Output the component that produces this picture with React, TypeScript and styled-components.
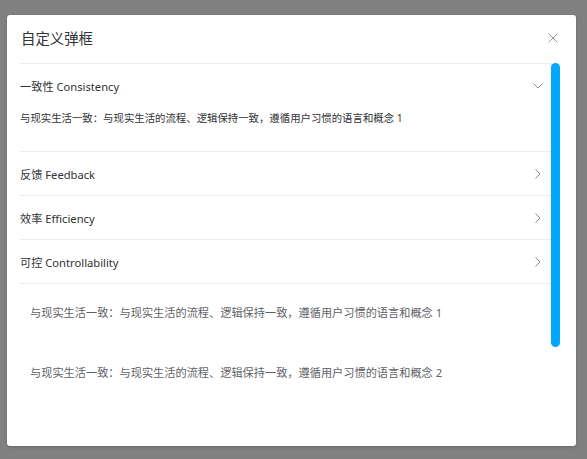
import React from 'react';
import styled, { createGlobalStyle } from 'styled-components';

const GlobalStyle = createGlobalStyle`
  html, body {
    margin: 0;
    padding: 0;
    background: #808080;
    font-family: "Noto Sans", "Noto Sans CJK SC", sans-serif;
  }
  #root {
    height: 459px;
  }
`;

const items = [
  { title: '一致性 Consistency', open: true },
  { title: '反馈 Feedback', open: false },
  { title: '效率 Efficiency', open: false },
  { title: '可控 Controllability', open: false },
];

const paragraphs = [1, 2];

const text = '与现实生活一致：与现实生活的流程、逻辑保持一致，遵循用户习惯的语言和概念';

const Chevron = ({ open }: { open: boolean }) =>
  open ? (
    <svg width="10" height="6" viewBox="0 0 10 6">
      <polyline points="0.5,0.5 5,5 9.5,0.5" fill="none" stroke="#8a8a8a" strokeWidth="1" />
    </svg>
  ) : (
    <svg width="6" height="10" viewBox="0 0 6 10">
      <polyline points="0.5,0.5 5,5 0.5,9.5" fill="none" stroke="#8a8a8a" strokeWidth="1" />
    </svg>
  );

export default function App() {
  return (
    <>
      <GlobalStyle />
      <Dialog>
        <Header>
          <Title>自定义弹框</Title>
          <Close aria-label="close">
            <svg width="10" height="10" viewBox="0 0 10 10">
              <path d="M0.5 0.5 L9.5 9.5 M9.5 0.5 L0.5 9.5" stroke="#9a9a9a" strokeWidth="1" />
            </svg>
          </Close>
        </Header>
        <Body>
          <Scroll>
            <Collapse>
              {items.map((it) => (
                <Item key={it.title}>
                  <ItemHead>
                    <span>{it.title}</span>
                    <IconBox>
                      <Chevron open={it.open} />
                    </IconBox>
                  </ItemHead>
                  {it.open && <ItemContent>{text} 1</ItemContent>}
                </Item>
              ))}
            </Collapse>
            {paragraphs.map((n) => (
              <Para key={n}>
                {text} {n}
              </Para>
            ))}
          </Scroll>
          <Track>
            <Thumb />
          </Track>
        </Body>
      </Dialog>
    </>
  );
}

const Dialog = styled.div`
  position: relative;
  top: 15px;
  margin-left: 7px;
  width: 569px;
  height: 431px;
  background: #fff;
  border-radius: 3px;
  box-shadow: 0 1px 3px rgba(0, 0, 0, 0.2);
  display: flex;
  flex-direction: column;
  box-sizing: border-box;
  padding: 0 16px 20px 13px;
`;

const Header = styled.div`
  height: 48px;
  flex: none;
  display: flex;
  align-items: center;
  justify-content: space-between;
  padding-left: 1px;
`;

const Title = styled.span`
  font-size: 14.4px;
  color: #303133;
  line-height: 20px;
  margin-top: -1px;
`;

const Close = styled.button`
  border: none;
  background: none;
  padding: 0;
  margin-right: 2px;
  margin-top: -2px;
  width: 10px;
  height: 10px;
  display: flex;
  cursor: pointer;
`;

const Body = styled.div`
  flex: 1;
  min-height: 0;
  display: flex;
`;

const Scroll = styled.div`
  flex: 1;
  min-width: 0;
  overflow: hidden;
`;

const Track = styled.div`
  width: 9px;
  flex: none;
  display: flex;
  flex-direction: column;
`;

const Thumb = styled.div`
  height: 284px;
  background: #00a8ff;
  border-radius: 5px;
`;

const Collapse = styled.div`
  border-top: 1px solid #e8ecf2;
`;

const Item = styled.div`
  border-bottom: 1px solid #e8ecf2;
`;

const ItemHead = styled.div`
  height: 43px;
  display: flex;
  align-items: center;
  justify-content: space-between;
  font-size: 11.2px;
  color: #303133;
`;

const IconBox = styled.span`
  width: 10px;
  display: flex;
  justify-content: center;
  margin-right: 8px;
`;

const ItemContent = styled.div`
  padding: 3px 0 25px;
  line-height: 16px;
  font-size: 10.4px;
  color: #303133;
`;

const Para = styled.p`
  margin: 0;
  padding: 21px 0 23px 10px;
  line-height: 16px;
  font-size: 11.2px;
  color: #606266;
`;
